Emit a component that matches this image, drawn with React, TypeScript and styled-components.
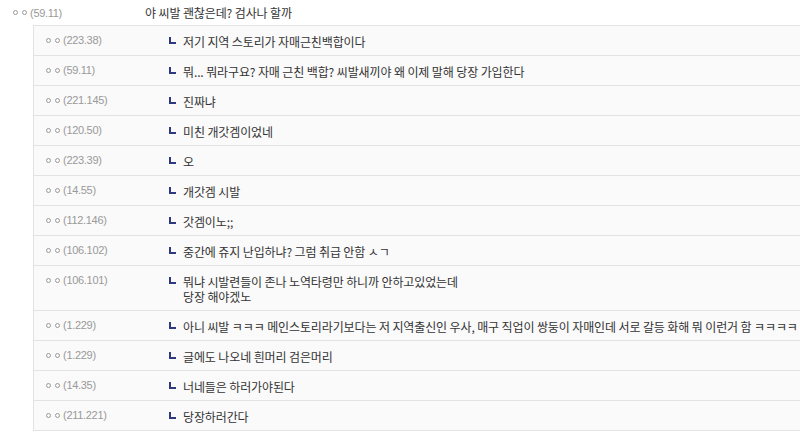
import React from "react";
import styled, { createGlobalStyle } from "styled-components";

const Global = createGlobalStyle`
  html, body { margin: 0; padding: 0; background: #fff; }
  body { font-family: "Noto Sans CJK KR", "Noto Sans", sans-serif; }
`;

const Page = styled.div`
  width: 800px;
  overflow: hidden;
`;

const TopRow = styled.div`
  display: flex;
  align-items: center;
  height: 25px;
  padding-left: 13px;
`;

const Nick = styled.div<{ $w: number }>`
  width: ${(p) => p.$w}px;
  flex: none;
  display: flex;
  align-items: center;
`;

const Circles = styled.span`
  display: flex;
  gap: 4px;
  margin-right: 3px;
`;

const Dot = styled.span`
  display: block;
  width: 3px;
  height: 3px;
  border: 1px solid #9a9a9a;
  border-radius: 50%;
`;

const Ip = styled.span`
  font-family: "Liberation Sans", "Noto Sans", sans-serif;
  font-size: 11px;
  color: #999;
  letter-spacing: -0.3px;
`;

const Text = styled.div`
  color: #333;
  font-size: 12px;
  line-height: 15px;
  letter-spacing: -0.12px;
  white-space: nowrap;
`;

const Replies = styled.div`
  margin-left: 33px;
  width: 800px;
  border-left: 1px solid #e3e3e3;
  border-top: 1px solid #e3e3e3;
  background: #fafafa;
`;

const Row = styled.div`
  display: flex;
  align-items: flex-start;
  padding: 8px 0 6px 12px;
  min-height: 15px;
  border-bottom: 1px solid #e3e3e3;
`;

const Marker = styled.svg`
  flex: none;
  width: 7px;
  height: 7px;
  margin: 3px 7px 0 0;
`;

const Body = styled.div`
  display: flex;
  align-items: flex-start;
`;

type Item = { ip: string; text: string[] };

const replies: Item[] = [
  { ip: "223.38", text: ["저기 지역 스토리가 자매근친백합이다"] },
  { ip: "59.11", text: ["뭐... 뭐라구요? 자매 근친 백합? 씨발새끼야 왜 이제 말해 당장 가입한다"] },
  { ip: "221.145", text: ["진짜냐"] },
  { ip: "120.50", text: ["미친 개갓겜이었네"] },
  { ip: "223.39", text: ["오"] },
  { ip: "14.55", text: ["개갓겜 시발"] },
  { ip: "112.146", text: ["갓겜이노;;"] },
  { ip: "106.102", text: ["중간에 쥬지 난입하냐? 그럼 취급 안함 ㅅㄱ"] },
  { ip: "106.101", text: ["뭐냐 시발련들이 존나 노역타령만 하니까 안하고있었는데", "당장 해야겠노"] },
  { ip: "1.229", text: ["아니 씨발 ㅋㅋㅋ 메인스토리라기보다는 저 지역출신인 우사, 매구 직업이 쌍둥이 자매인데 서로 갈등 화해 뭐 이런거 함 ㅋㅋㅋㅋ"] },
  { ip: "1.229", text: ["글에도 나오네 흰머리 검은머리"] },
  { ip: "14.35", text: ["너네들은 하러가야된다"] },
  { ip: "211.221", text: ["당장하러간다"] },
];

const NickCell = ({ ip, w }: { ip: string; w: number }) => (
  <Nick $w={w}>
    <Circles>
      <Dot />
      <Dot />
    </Circles>
    <Ip>({ip})</Ip>
  </Nick>
);

export default function App() {
  return (
    <Page>
      <Global />
      <TopRow>
        <NickCell ip="59.11" w={132} />
        <Text>야 씨발 괜찮은데? 검사나 할까</Text>
      </TopRow>
      <Replies>
        {replies.map((r, i) => (
          <Row key={i}>
            <NickCell ip={r.ip} w={123} />
            <Body>
              <Marker viewBox="0 0 7 7">
                <path d="M1 0 V6 H7" fill="none" stroke="#2f3a7e" strokeWidth="2" />
              </Marker>
              <Text>
                {r.text.map((t, j) => (
                  <div key={j}>{t}</div>
                ))}
              </Text>
            </Body>
          </Row>
        ))}
      </Replies>
    </Page>
  );
}
